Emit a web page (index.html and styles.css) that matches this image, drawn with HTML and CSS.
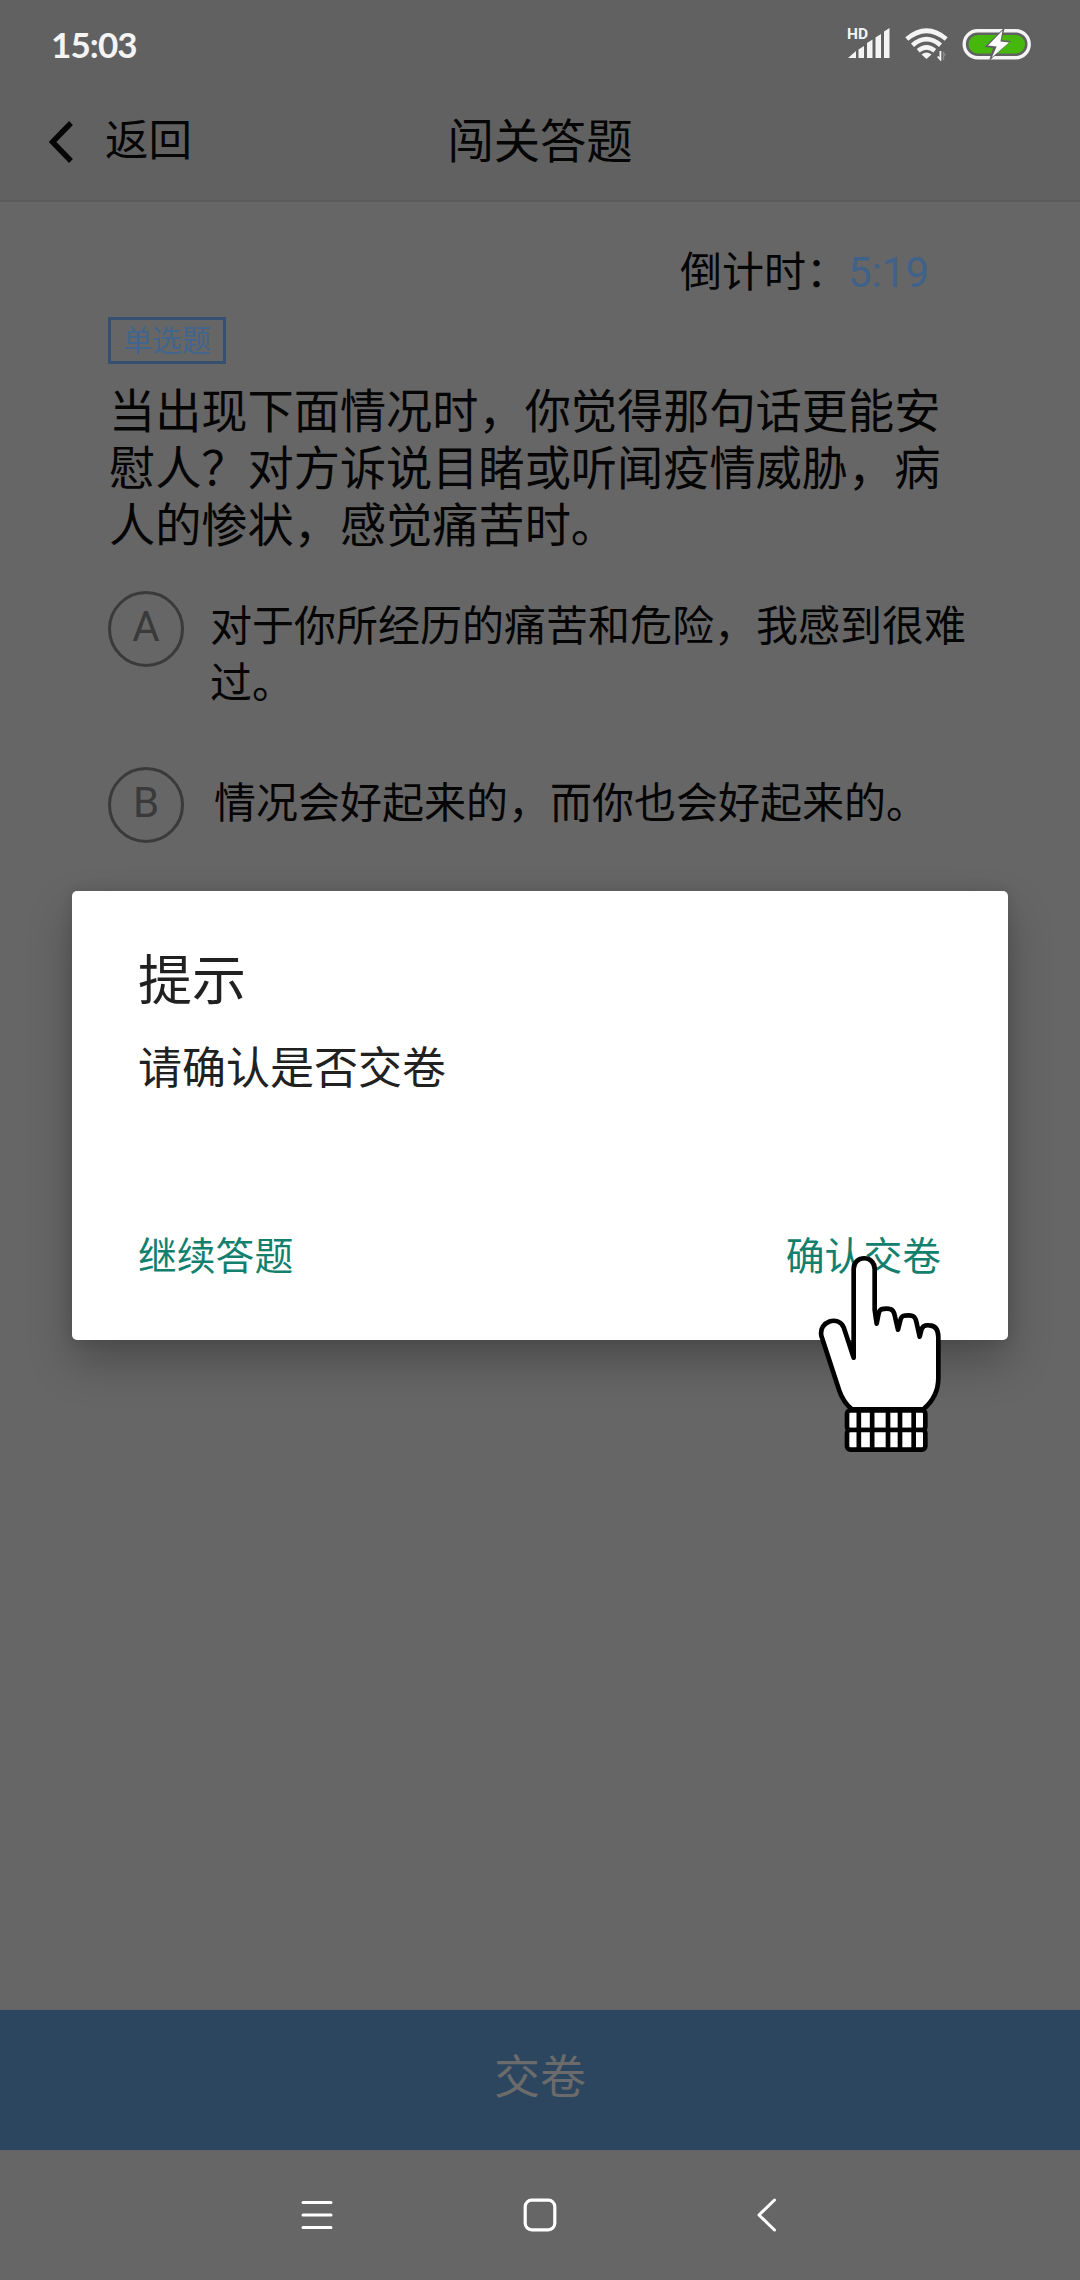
FILE: index.html
```html
<!DOCTYPE html>
<html lang="zh-CN">
<head>
<meta charset="utf-8">
<title>闯关答题</title>
<link rel="stylesheet" href="styles.css">
</head>
<body>
<div class="screen">
  <header class="header">
    <div class="status">
      <span class="clock">15:03</span>
      <div class="status-icons">
        <div class="signal">
          <span class="hd">HD</span>
          <svg width="42" height="30" viewBox="0 0 42 30" fill="#f4f4f4"><path d="M0 30L8 23V30ZM10.500 30V21.500L16 18V30ZM19 30V15L24.500 11.500V30ZM27.500 30V9.500L33 6V30ZM36 30V3.500L41.500 0V30Z"/></svg>
        </div>
        <svg class="wifi" width="44" height="34" viewBox="0 0 44 34" fill="none" stroke="#f4f4f4" stroke-width="4.600"><path d="M1.800 12Q21.500 -4.500 41.200 12M7.500 18.200Q21.500 6 35.500 18.200M13.200 23.700Q21.500 17 29.800 23.700"/><path d="M16.500 27.500Q21.500 23.500 26.500 27.500L21.500 32Z" fill="#f4f4f4" stroke="none"/><path d="M35.400 24V32.500L32.700 29.500" stroke-width="1.800"/><path d="M38.500 33V26L40.500 28.500" stroke="#888" stroke-width="1.500"/></svg>
        <svg width="70" height="34" viewBox="0 0 70 34"><rect x="2.200" y="3.700" width="65" height="27" rx="13.500" fill="none" stroke="#f4f4f4" stroke-width="3.400"/><rect x="6.500" y="8" width="56.500" height="18.500" rx="9.250" fill="#46b70c"/><path d="M43 0L22.500 20L31 21L27 34L49 14L39.500 13Z" fill="#616161"/><path d="M40.500 3.500L26 18.500L34.700 19.500L29.800 30.500L47 15.500L38.400 14.500Z" fill="#fff"/></svg>
      </div>
    </div>
    <div class="titlebar">
      <div class="back">
        <svg width="24" height="42" viewBox="0 0 24 42" fill="none" stroke="#060606" stroke-width="5.400"><path d="M22 2L3.500 21L22 40"/></svg>
        <span>返回</span>
      </div>
      <h1 class="title">闯关答题</h1>
    </div>
  </header>

  <main class="quiz">
    <div class="timer"><span>倒计时：</span><span class="time-left">5:19</span></div>
    <div class="tag">单选题</div>
    <p class="question">当出现下面情况时，你觉得那句话更能安慰人？对方诉说目睹或听闻疫情威胁，病人的惨状，感觉痛苦时。</p>
    <div class="option">
      <span class="letter">A</span>
      <p class="answer">对于你所经历的痛苦和危险，我感到很难过。</p>
    </div>
    <div class="option option-b">
      <span class="letter">B</span>
      <p class="answer">情况会好起来的，而你也会好起来的。</p>
    </div>
  </main>

  <div class="submit">交卷</div>
  <nav class="navbar">
    <svg width="32" height="34" viewBox="0 0 32 34" stroke="#fff" stroke-width="3" stroke-linecap="round"><path d="M2 4.500H30M2 17H30M2 29.500H30"/></svg>
    <svg width="34" height="34" viewBox="0 0 34 34" fill="none" stroke="#fff" stroke-width="3.200"><rect x="2.200" y="2.200" width="29.600" height="29.600" rx="6.500"/></svg>
    <svg width="22" height="34" viewBox="0 0 22 34" fill="none" stroke="#fff" stroke-width="3" stroke-linecap="round" stroke-linejoin="round"><path d="M18.500 2L3 17L18.500 32"/></svg>
  </nav>

  <section class="dialog">
    <h2 class="dialog-title">提示</h2>
    <p class="dialog-text">请确认是否交卷</p>
    <div class="dialog-actions"><span>继续答题</span><span>确认交卷</span></div>
  </section>

  <svg class="hand" width="130" height="204" viewBox="165 156 390 612" fill="#fff" stroke="#000" stroke-width="14" stroke-linejoin="round" stroke-linecap="round">
    <path d="M281 473V207C281 164 344 164 344 207V330L350 371L356 340C359 326 368 326 380 326C398 326 402 334 405 350L414 389L421 361C424 346 434 346 446 346C463 346 467 354 470 370L479 410L485 387C489 375 498 375 508 376C528 377 535 392 535 412V535C535 575 515 607 490 628H276C256 612 245 592 238 572L184 407C176 364 235 345 251 382Z"/>
    <rect x="261" y="631" width="235" height="59" rx="10"/>
    <rect x="261" y="690" width="235" height="59" rx="10"/>
    <path d="M296.500 631V749M336.500 631V749M384 631V749M420 631V749M461 631V749" stroke-linecap="butt"/>
  </svg>
</div>
</body>
</html>
```
FILE: styles.css
```css
* { box-sizing: border-box; margin: 0; padding: 0; }
body { background: #666; }
svg { display: block; flex: none; }

.screen {
  position: relative;
  display: flex;
  flex-direction: column;
  width: 1080px;
  height: 2280px;
  background: #666;
  color: #050505;
  font-family: Roboto, "Noto Sans CJK SC", sans-serif;
  overflow: hidden;
}

.header {
  height: 202px;
  background: #616161;
  border-bottom: 2px solid #5c5c5c;
}
.status {
  display: flex;
  justify-content: space-between;
  height: 84px;
  padding: 0 48px 0 51px;
}
.clock {
  font: bold 35px/84px Lato, sans-serif;
  letter-spacing: -0.9px;
  padding-top: 2px;
  color: #f4f4f4;
}
.status-icons { display: flex; align-items: flex-start; padding-top: 27px; }
.signal { position: relative; width: 57px; padding-top: 1px; }
.hd {
  position: absolute;
  left: -1px;
  top: -2px;
  font: bold 15.500px/18px Roboto, sans-serif;
  color: #f4f4f4;
}
.wifi { margin-right: 13px; }

.titlebar {
  display: grid;
  grid-template-columns: 1fr auto 1fr;
  align-items: center;
  height: 112px;
}
.back {
  display: flex;
  align-items: center;
  gap: 32px;
  padding: 4px 0 0 49px;
  font-size: 43.500px;
  line-height: 60px;
}
.title { padding-top: 4px; font-size: 46.300px; font-weight: 400; line-height: 60px; }

.quiz { flex: 1; padding: 41px 108px 0; }
.timer {
  display: flex;
  justify-content: flex-end;
  align-items: center;
  height: 60px;
  margin-right: 43px;
  font-size: 42px;
  line-height: 60px;
}
.time-left { color: #3f618a; }
.tag {
  width: 118px;
  height: 47px;
  margin-top: 14px;
  border: 3px solid #34516f;
  color: #41658c;
  font-size: 29.400px;
  line-height: 43px;
  text-align: center;
}
.question {
  width: 836px;
  margin-top: 20px;
  padding-left: 1px;
  font-size: 46.200px;
  line-height: 57px;
}
.option { display: flex; margin-top: 36px; }
.letter {
  flex: none;
  width: 76px;
  height: 76px;
  border: 3px solid #3a3a3a;
  border-radius: 50%;
  color: #3a3a3a;
  font-size: 42px;
  line-height: 66px;
  text-align: center;
}
.answer { width: 758px; margin-left: 26px; padding-top: 7px; font-size: 42px; line-height: 57px; }
.option-b { margin-top: 55px; }
.option-b .answer { margin-left: 30px; padding-top: 8px; }

.submit {
  height: 140px;
  background: #2c4660;
  color: #6b6b6b;
  font-size: 46px;
  line-height: 134px;
  text-align: center;
}
.navbar {
  display: grid;
  grid-template-columns: 1fr auto 1fr;
  align-items: center;
  height: 130px;
  padding: 0 302px 0 301px;
}
.navbar svg:last-child { justify-self: end; }

.dialog {
  position: absolute;
  left: 72px;
  top: 891px;
  width: 936px;
  height: 449px;
  padding: 54px 67px 0 66px;
  border-radius: 5px;
  background: #fff;
  color: #212121;
  box-shadow: 0 22px 44px rgba(0, 0, 0, .26), 0 0 14px rgba(0, 0, 0, .12);
}
.dialog-title { font-size: 54px; font-weight: 400; line-height: 74px; }
.dialog-text { margin-top: 20px; font-size: 44px; line-height: 60px; }
.dialog-actions {
  display: flex;
  justify-content: space-between;
  margin-top: 128px;
  color: #12806d;
  font-size: 38.800px;
  line-height: 60px;
}
.hand { position: absolute; left: 815px; top: 1252px; }
```
